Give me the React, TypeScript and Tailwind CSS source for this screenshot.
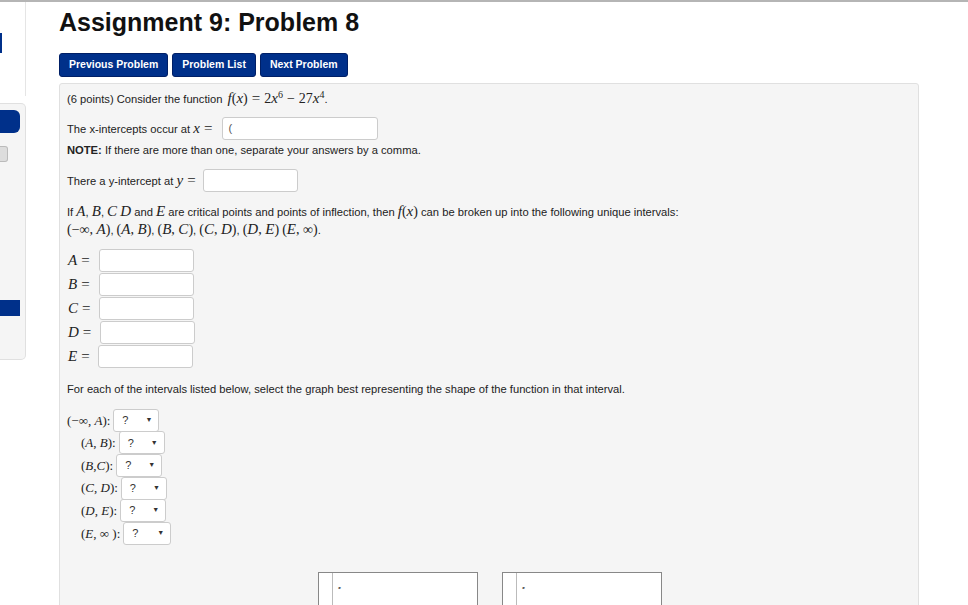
const M = ({ children }: { children: React.ReactNode }) => (
  <span className="font-['Liberation_Serif',serif] italic text-[15px]">{children}</span>
);
const Ms = ({ children }: { children: React.ReactNode }) => (
  <span className="font-['Liberation_Serif',serif] italic text-[13px]">{children}</span>
);
const R = ({ children }: { children: React.ReactNode }) => (
  <span className="font-['Liberation_Serif',serif] not-italic text-[14px]">{children}</span>
);
const Eq = () => <span className="font-['Liberation_Serif',serif] text-[15px] mx-[4px]">=</span>;

const Input = ({ w, value }: { w: string; value?: string }) => (
  <span className={`inline-block align-middle h-[23px] ${w} bg-white border border-[#cccccc] rounded-[3px] px-[5px] text-[11px] leading-[21px] text-[#555]`}>
    {value}
  </span>
);

const Select = ({ w }: { w: string }) => (
  <span className={`inline-flex items-center justify-between align-middle h-[23px] ${w} bg-white border border-[#cccccc] rounded-[3px] pl-[8px] pr-[6px] text-[11px] text-[#333]`}>
    <span>?</span>
    <span className="text-[7px]">▼</span>
  </span>
);

const App = () => {
  const vars = [
    { v: 'A', ml: 'ml-0' },
    { v: 'B', ml: 'ml-0' },
    { v: 'C', ml: 'ml-0' },
    { v: 'D', ml: 'ml-[1px]' },
    { v: 'E', ml: 'ml-[-1px]' },
  ];

  const intervals = [
    { label: <>(−∞, <Ms>A</Ms>):</>, pl: 'pl-0', w: 'w-[46px]' },
    { label: <>(<Ms>A</Ms>, <Ms>B</Ms>):</>, pl: 'pl-[14px]', w: 'w-[46px]' },
    { label: <>(<Ms>B</Ms>,<Ms>C</Ms>):</>, pl: 'pl-[14px]', w: 'w-[46px]' },
    { label: <>(<Ms>C</Ms>, <Ms>D</Ms>):</>, pl: 'pl-[14px]', w: 'w-[46px]' },
    { label: <>(<Ms>D</Ms>, <Ms>E</Ms>):</>, pl: 'pl-[14px]', w: 'w-[46px]' },
    { label: <>(<Ms>E</Ms>, ∞ ):</>, pl: 'pl-[14px]', w: 'w-[48px]' },
  ];

  return (
    <div className="w-[968px] h-[605px] overflow-hidden bg-white font-['Liberation_Sans',Arial,sans-serif] text-[11.2px] text-[#222] border-t-2 border-[#b5b5b5] flex">
      {/* Left sidebar */}
      <div className="w-[26px] shrink-0 flex flex-col">
        <div className="h-[94px] border-r border-[#e5e5e5] bg-white pt-[31px]">
          <div className="w-[2px] h-[20px] bg-[#00308a]" />
        </div>
        <div className="mt-[7px] h-[257px] bg-[#f5f5f5] border border-l-0 border-[#e0e0e0] rounded-r-[5px] pt-[6px] flex flex-col">
          <div className="w-[20px] h-[23px] bg-[#00308a] rounded-r-[6px]" />
          <div className="mt-[13px] w-[8px] h-[16px] bg-[#dddddd] border border-l-0 border-[#bbbbbb] rounded-r-[3px]" />
          <div className="mt-[138px] w-[20px] h-[16px] bg-[#00308a]" />
        </div>
      </div>

      {/* Main */}
      <div className="ml-[33px] w-[860px] flex flex-col">
        <h1 className="mt-[6px] text-[25px] font-bold leading-[28px] text-[#111]">Assignment 9: Problem 8</h1>
        <div className="mt-[17px] flex gap-[4px]">
          {['Previous Problem', 'Problem List', 'Next Problem'].map((b) => (
            <button
              key={b}
              className="h-[24px] px-[9px] bg-[#00308a] border border-[#001f66] rounded-[3px] text-white text-[10.5px] font-bold"
            >
              {b}
            </button>
          ))}
        </div>

        <div className="mt-[6px] flex-1 bg-[#f5f5f5] border border-[#e0e0e0] rounded-t-[3px] px-[7px] pt-[5px]">
          <p className="leading-[18px]">
            (6 points) Consider the function{' '}
            <span className="ml-[2px]">
              <M>f</M>
              <R>(</R>
              <M>x</M>
              <R>)</R>
              <Eq />
              <R>2</R>
              <M>x</M>
              <sup className="font-['Liberation_Serif',serif] text-[10px]">6</sup>
              <R>
                <span className="mx-[4px]">−</span>27
              </R>
              <M>x</M>
              <sup className="font-['Liberation_Serif',serif] text-[10px]">4</sup>
            </span>
            .
          </p>

          <div className="mt-[9px] flex items-center">
            <span>
              The x-intercepts occur at <M>x</M>
              <Eq />
            </span>
            <span className="ml-[6px]">
              <Input w="w-[156px]" value="(" />
            </span>
          </div>
          <p className="mt-[3px] leading-[14px]">
            <b>NOTE:</b> If there are more than one, separate your answers by a comma.
          </p>

          <div className="mt-[12px] flex items-center">
            <span>
              There a y-intercept at <M>y</M>
              <Eq />
            </span>
            <span className="ml-[3px]">
              <Input w="w-[95px]" />
            </span>
          </div>

          <p className="mt-[11px] leading-[17px]">
            If <M>A</M>, <M>B</M>, <M>C</M> <M>D</M> and <M>E</M> are critical points and points of inflection, then{' '}
            <M>f</M>
            <R>(</R>
            <M>x</M>
            <R>)</R> can be broken up into the following unique intervals:
            <br />
            <R>(−∞, </R>
            <M>A</M>
            <R>)</R>, <R>(</R>
            <M>A</M>
            <R>, </R>
            <M>B</M>
            <R>)</R>, <R>(</R>
            <M>B</M>
            <R>, </R>
            <M>C</M>
            <R>)</R>, <R>(</R>
            <M>C</M>
            <R>, </R>
            <M>D</M>
            <R>)</R>, <R>(</R>
            <M>D</M>
            <R>, </R>
            <M>E</M>
            <R>)</R> <R>(</R>
            <M>E</M>
            <R>, ∞)</R>.
          </p>

          <div className="mt-[10px] flex flex-col gap-[1px]">
            {vars.map((r) => (
              <div key={r.v} className="flex items-center">
                <span className="w-[32px] pl-[1px]">
                  <M>{r.v}</M>
                  <Eq />
                </span>
                <span className={r.ml}>
                  <Input w="w-[95px]" />
                </span>
              </div>
            ))}
          </div>

          <p className="mt-[14px] leading-[14px]">
            For each of the intervals listed below, select the graph best representing the shape of the function in that
            interval.
          </p>

          <div className="mt-[13px] flex flex-col">
            {intervals.map((it, i) => (
              <div key={i} className={`flex items-center gap-[3px] h-[22.6px] ${it.pl}`}>
                <span className="font-['Liberation_Serif',serif] text-[13px]">{it.label}</span>
                <Select w={it.w} />
              </div>
            ))}
          </div>

          <div className="mt-[27px] ml-[251px] flex gap-[24px]">
            {[0, 1].map((k) => (
              <div key={k} className="w-[160px] h-[40px] bg-white border border-[#888] flex">
                <div className="w-[14px] border-r border-[#bbb] bg-white" />
                <div className="pl-[5px] pt-[9px] text-[8px] leading-none text-[#555]">❟</div>
              </div>
            ))}
          </div>
        </div>
      </div>
    </div>
  );
};

export default App;
